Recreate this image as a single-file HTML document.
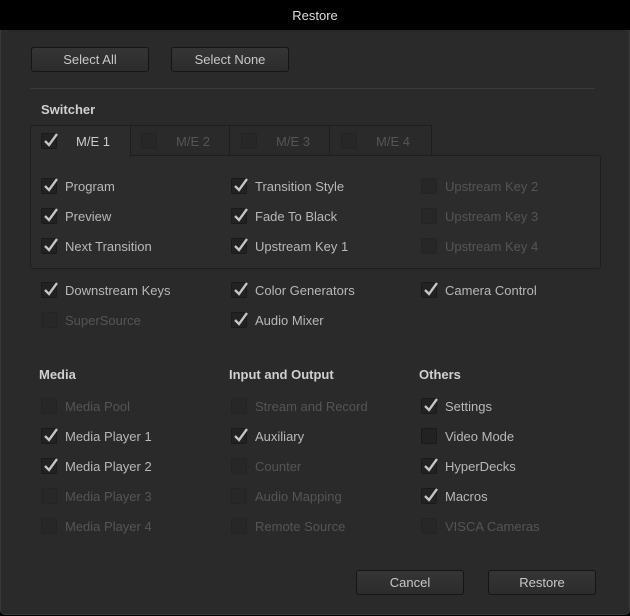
<!DOCTYPE html><html><head><style>
body{margin:0;width:630px;height:616px;background:#000;font-family:"Liberation Sans",sans-serif;font-size:13px;position:relative;overflow:hidden}
.win{position:absolute;left:0;top:30px;width:628px;height:584px;background:#2a2a2a;border:1px solid #3a3a3a;border-top:none;border-radius:0 0 5px 5px}
.t{position:absolute;color:#b8b8b8;white-space:nowrap;line-height:16px}
.d{color:#555}
.h{position:absolute;color:#d0d0d0;font-weight:bold;font-size:13px}
.cb{position:absolute;width:16px;height:16px;background:#222;border:1px solid #1a1a1a;border-radius:2px;box-sizing:border-box}
.cb.x{background:#272727;border-color:#242424}
.cb svg{position:absolute;left:0;top:-3px}
.btn{position:absolute;height:25px;background:linear-gradient(#353535,#2c2c2c);border:1px solid #151515;border-radius:3px;box-sizing:border-box;color:#c8c8c8;text-align:center;line-height:24px}
</style></head><body>
<div style="position:absolute;top:8px;width:630px;text-align:center;color:#ddd">Restore</div>
<div class="win"></div>
<div class="btn" style="left:31px;top:47px;width:118px">Select All</div>
<div class="btn" style="left:171px;top:47px;width:118px">Select None</div>
<div style="position:absolute;left:30px;top:88px;width:565px;height:1px;background:#3a3a3a"></div>
<div class="h" style="left:41px;top:102px">Switcher</div>
<div style="position:absolute;left:30px;top:155px;width:569px;height:112px;border:1px solid #1e1e1e;background:#2c2c2c;border-radius:0 3px 3px 3px"></div>
<div style="position:absolute;left:130px;top:125px;width:300px;height:29px;background:#2a2a2a;border:1px solid #1e1e1e;border-bottom:none"></div>
<div style="position:absolute;left:229px;top:125px;width:1px;height:30px;background:#1e1e1e"></div>
<div style="position:absolute;left:329px;top:125px;width:1px;height:30px;background:#1e1e1e"></div>
<div style="position:absolute;left:30px;top:125px;width:99px;height:31px;background:#2c2c2c;border:1px solid #1e1e1e;border-bottom:none;border-radius:3px 0 0 0"></div>
<div class="t" style="left:76px;top:134px;color:#ccc">M/E 1</div>
<div class="t d" style="left:176px;top:134px">M/E 2</div>
<div class="t d" style="left:276px;top:134px">M/E 3</div>
<div class="t d" style="left:376px;top:134px">M/E 4</div>
<div id="c"></div>
<div class="btn" style="left:356px;top:570px;width:108px">Cancel</div>
<div class="btn" style="left:488px;top:570px;width:108px">Restore</div>
<div class="h" style="left:39px;top:367px">Media</div>
<div class="h" style="left:229px;top:367px">Input and Output</div>
<div class="h" style="left:419px;top:367px">Others</div>
<script>
var ck='<svg width="18" height="18" viewBox="0 0 18 18"><path d="M3 10 L7 14 L15 3" fill="none" stroke="#111" stroke-width="3.4" opacity=".5"/><path d="M3 10 L7 14 L15 3" fill="none" stroke="#c4c4c4" stroke-width="2.4"/></svg>';
var items=[[41,141,1,''],[141,141,0,''],[241,141,0,''],[341,141,0,''],
[41,186,1,'Program'],[41,216,1,'Preview'],[41,246,1,'Next Transition'],
[231,186,1,'Transition Style'],[231,216,1,'Fade To Black'],[231,246,1,'Upstream Key 1'],
[421,186,0,'Upstream Key 2'],[421,216,0,'Upstream Key 3'],[421,246,0,'Upstream Key 4'],
[41,290,1,'Downstream Keys'],[41,320,0,'SuperSource'],[231,290,1,'Color Generators'],[231,320,1,'Audio Mixer'],[421,290,1,'Camera Control'],
[41,406,0,'Media Pool'],[41,436,1,'Media Player 1'],[41,466,1,'Media Player 2'],[41,496,0,'Media Player 3'],[41,526,0,'Media Player 4'],
[231,406,0,'Stream and Record'],[231,436,1,'Auxiliary'],[231,466,0,'Counter'],[231,496,0,'Audio Mapping'],[231,526,0,'Remote Source'],
[421,406,1,'Settings'],[421,436,2,'Video Mode'],[421,466,1,'HyperDecks'],[421,496,1,'Macros'],[421,526,0,'VISCA Cameras']];
var h='';items.forEach(function(i){var on=i[2]==1,en=i[2]>0;
h+='<div class="cb'+(en?'':' x')+'" style="left:'+i[0]+'px;top:'+(i[1]-8)+'px">'+(on?ck:'')+'</div>';
if(i[3])h+='<div class="t'+(en?'':' d')+'" style="left:'+(i[0]+24)+'px;top:'+(i[1]-7)+'px">'+i[3]+'</div>';});
document.getElementById('c').innerHTML=h;
</script>
</body></html>
